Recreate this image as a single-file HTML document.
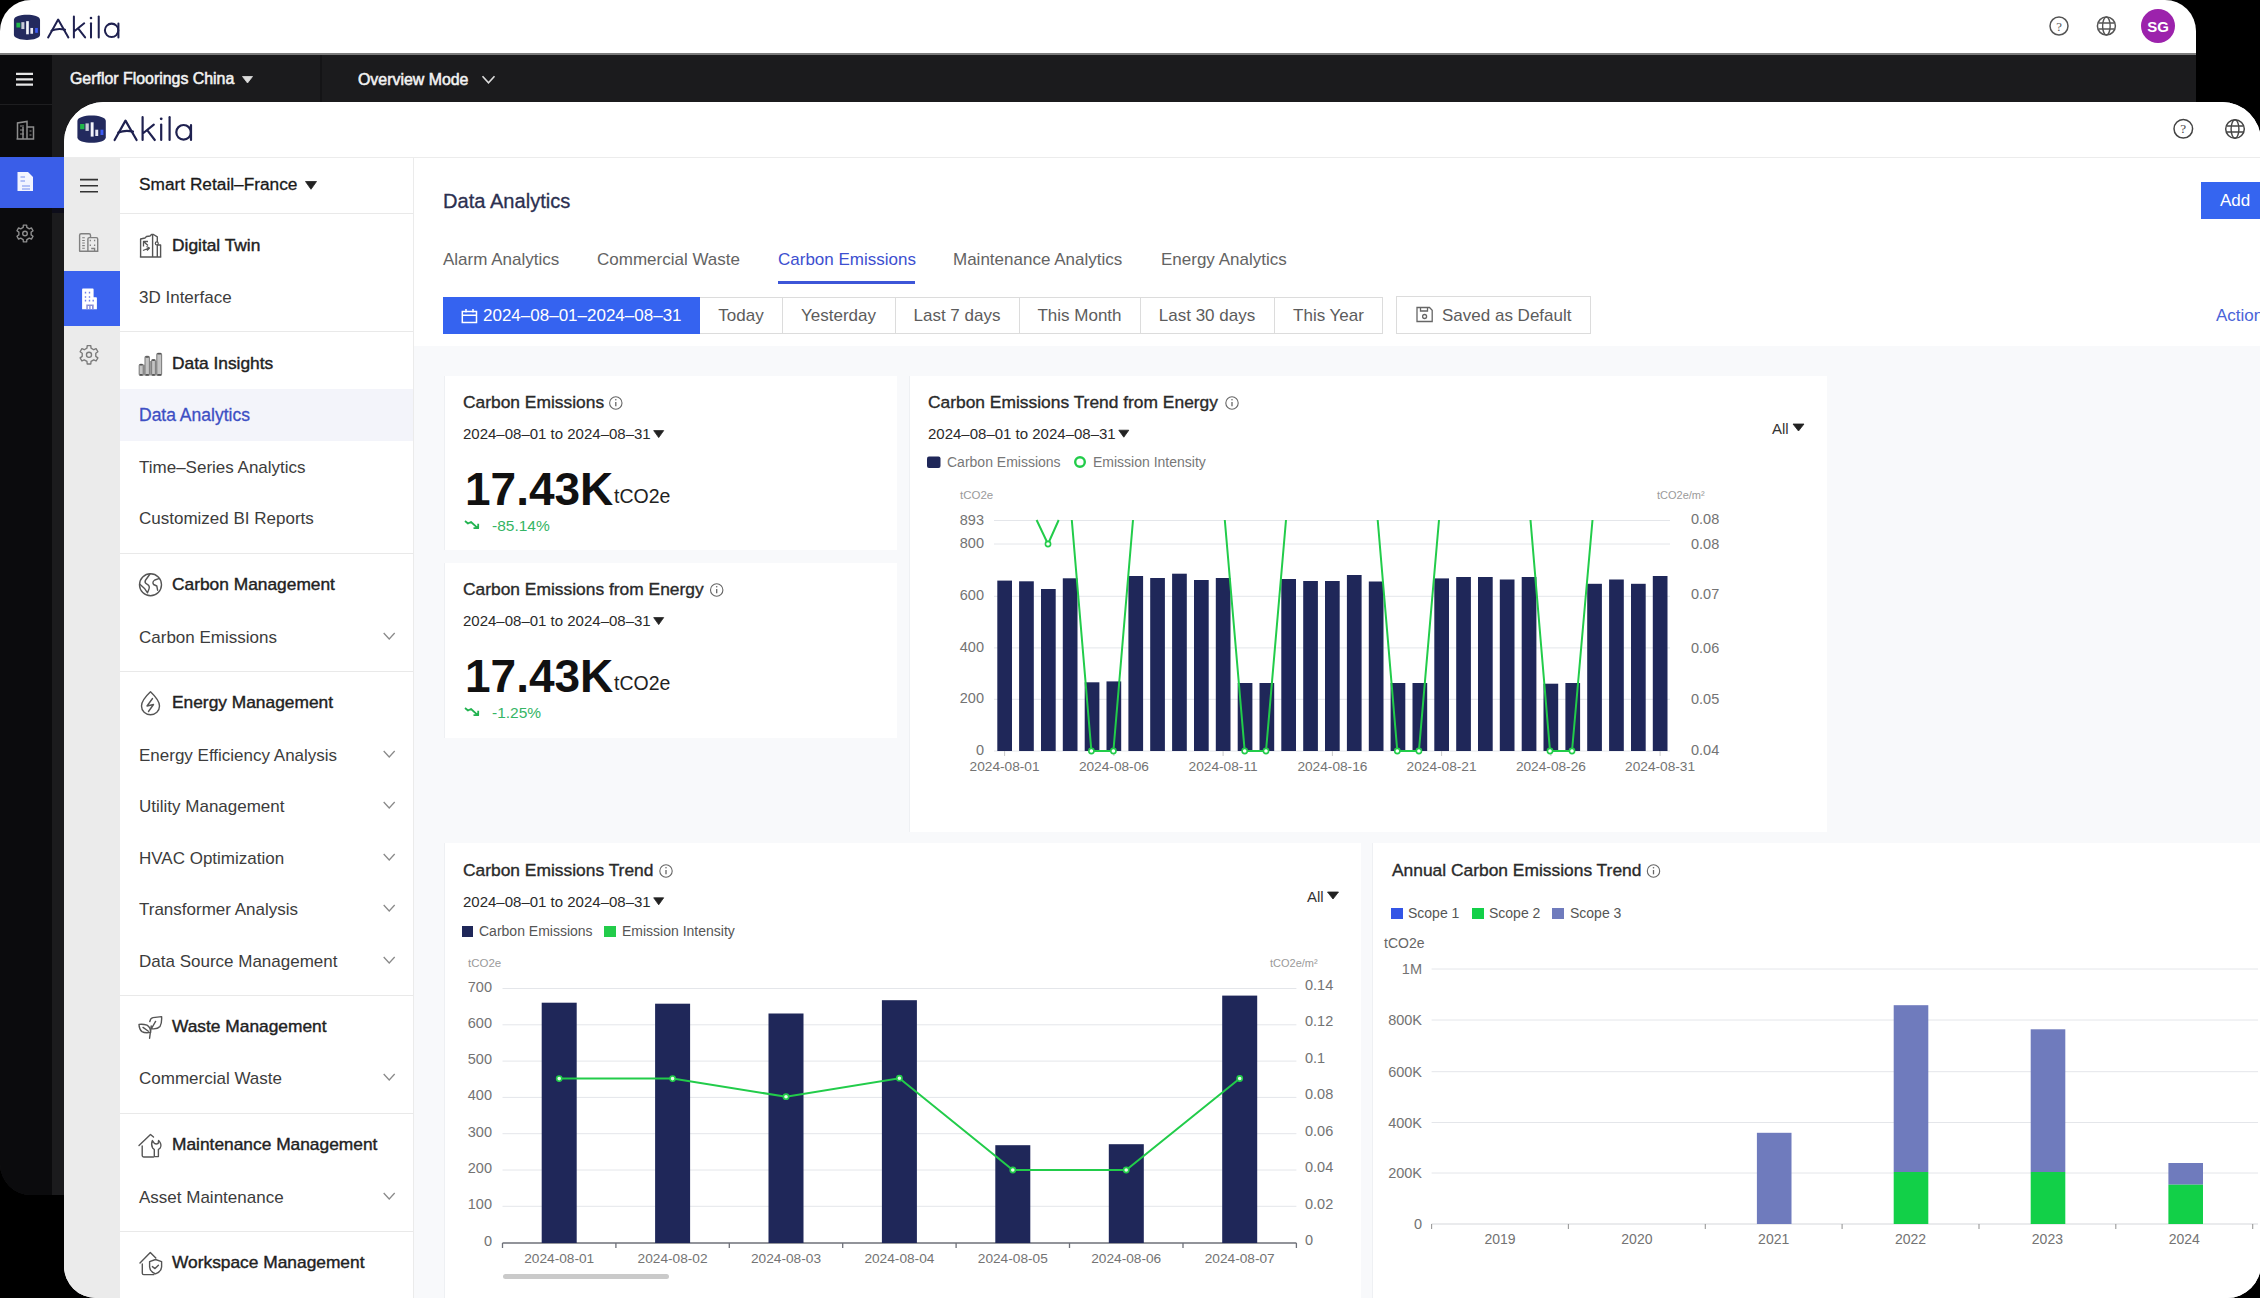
<!DOCTYPE html>
<html><head><meta charset="utf-8">
<style>
*{margin:0;padding:0;box-sizing:border-box}
html,body{width:2260px;height:1298px;overflow:hidden;background:#000;font-family:"Liberation Sans",sans-serif}
.a{position:absolute}
.t{position:absolute;white-space:nowrap;line-height:1}
.layer{position:absolute;left:0;top:0;width:2260px;height:1298px}
#back{clip-path:inset(0 64px 103px 0 round 31px);background:#1b1b1d}
#front{clip-path:inset(102px -1px 0 64px round 40px 39px 34px 32px);background:#f8f9fb}
svg{position:absolute;left:0;top:0}
</style></head>
<body>

<div id="back" class="layer">
<div class="a" style="left:0px;top:0px;width:2196px;height:53px;background:#fff;"></div>
<div class="a" style="left:0px;top:53px;width:2196px;height:2px;background:#7d7d7d;"></div>
<div class="a" style="left:0px;top:55px;width:52px;height:1140px;background:#0b0b0d;"></div>
<div class="a" style="left:0px;top:104px;width:52px;height:1px;background:#1e1e20;"></div>
<div class="a" style="left:0px;top:157px;width:64px;height:51px;background:#3a5ee8;"></div>
<div class="a" style="left:52px;top:208px;width:12px;height:5px;background:#0d0d1a;"></div>
<div class="t" style="left:70px;top:70.7px;font-size:15.9px;color:#f2f2f2;font-weight:normal;-webkit-text-stroke:0.55px #f2f2f2;">Gerflor Floorings China</div>
<div class="t" style="left:358px;top:71.7px;font-size:15.9px;color:#f2f2f2;font-weight:normal;-webkit-text-stroke:0.55px #f2f2f2;">Overview Mode</div>
<div class="a" style="left:320px;top:55px;width:2px;height:47px;background:#141416;"></div>
<svg width="2260" height="1298" style="position:absolute;left:0;top:0">
<g transform="translate(14,14.8) scale(0.92) translate(-77.5,-115.4)"><path d="M77.4,121 C77.4,113.6 105.8,113.6 105.8,121 L105.8,137.2 C105.8,144.6 77.4,144.6 77.4,137.2 Z" fill="#232a5e"/>
<rect x="80.1" y="124" width="4.3" height="5.2" fill="#20b64a"/>
<rect x="85.5" y="123.4" width="3.3" height="7.5" fill="#c9ccd8"/>
<rect x="90.7" y="122.3" width="2.9" height="14.3" fill="#f4f5fa"/>
<rect x="95.3" y="129.7" width="2.9" height="6.3" fill="#e8e9f2"/>
<rect x="100.5" y="129.7" width="2.9" height="5.3" fill="#3d5cf5"/>
<path d="M114.6,140 L125.5,120.6 L136.6,140" fill="none" stroke="#1f2150" stroke-width="2.2" stroke-linecap="round" stroke-linejoin="round"/>
<path d="M118.3,132.6 C123,130.6 128,130.4 133,131.6" fill="none" stroke="#1f2150" stroke-width="2.2" stroke-linecap="round" stroke-linejoin="round"/>
<path d="M142.6,117.2 L142.6,140 M153.8,124.6 L143.4,133 M147.2,130.2 L154.8,140" fill="none" stroke="#1f2150" stroke-width="2.2" stroke-linecap="round" stroke-linejoin="round"/>
<path d="M161.2,124.6 L161.2,140" fill="none" stroke="#1f2150" stroke-width="2.2" stroke-linecap="round" stroke-linejoin="round"/>
<circle cx="161.2" cy="118.8" r="1.4" fill="#1f2150"/>
<path d="M169.6,117.2 L169.6,140" fill="none" stroke="#1f2150" stroke-width="2.2" stroke-linecap="round" stroke-linejoin="round"/>
<circle cx="183.6" cy="132.3" r="7.3" fill="none" stroke="#1f2150" stroke-width="2.2" stroke-linecap="round" stroke-linejoin="round"/>
<path d="M191,125 L191,140" fill="none" stroke="#1f2150" stroke-width="2.2" stroke-linecap="round" stroke-linejoin="round"/></g>
<circle cx="2059" cy="26" r="9" fill="none" stroke="#555" stroke-width="1.5"/><text x="2059" y="30.6" text-anchor="middle" font-size="12.8" fill="#555" font-family="Liberation Serif, serif">?</text>
<circle cx="2106.4" cy="26" r="9" fill="none" stroke="#555" stroke-width="1.5"/><ellipse cx="2106.4" cy="26" rx="3.78" ry="9" fill="none" stroke="#555" stroke-width="1.4"/><path d="M2098.4,23 L2114.4,23 M2098.4,29 L2114.4,29" stroke="#555" stroke-width="1.4"/>
<circle cx="2158" cy="26" r="17" fill="#9c22ac"/>
<text x="2158" y="31.5" text-anchor="middle" font-size="15" font-weight="bold" fill="#fff" font-family="Liberation Sans, sans-serif">SG</text>
<path d="M16,73.8 L33,73.8 M16,79.3 L33,79.3 M16,84.7 L33,84.7" stroke="#e6e6e6" stroke-width="2.2"/>
<path d="M242.5,76.5 L252.5,76.5 L247.5,83 Z" fill="#dcdcdc" stroke="#dcdcdc" stroke-width="0.8" stroke-linejoin="round"/>
<path d="M482.5,76.25 L488.5,82.75 L494.5,76.25" fill="none" stroke="#dcdcdc" stroke-width="1.6"/>
<path d="M17.5,139 L17.5,123 L27,121.5 L27,139 M23,127 L23,139 M27,127 L33.5,127 L33.5,139 L16.5,139" fill="none" stroke="#8d8d8d" stroke-width="1.5"/>
<path d="M20,126 L24,126 M20,130 L24,130 M20,134 L24,134 M29.5,131 L31.5,131 M29.5,135 L31.5,135" stroke="#8d8d8d" stroke-width="1.2"/>
<path d="M17.5,172 L28,172 L33,177 L33,191 L17.5,191 Z" fill="#f2f4ff"/>
<path d="M20.5,177 L25,177 M20.5,181 L25,181 M22,186 L30,186 M22,189 L30,189" stroke="#9fb0f5" stroke-width="1.3"/>
<path d="M23.16,227.48 L23.38,225.16 L26.62,225.16 L26.84,227.48 L29.29,228.90 L31.42,227.92 L33.04,230.73 L31.13,232.09 L31.13,234.91 L33.04,236.27 L31.42,239.08 L29.29,238.10 L26.84,239.52 L26.62,241.84 L23.38,241.84 L23.16,239.52 L20.71,238.10 L18.58,239.08 L16.96,236.27 L18.87,234.91 L18.87,232.09 L16.96,230.73 L18.58,227.92 L20.71,228.90 Z" fill="none" stroke="#8d8d8d" stroke-width="1.4" stroke-linejoin="round"/><circle cx="25" cy="233.5" r="2.29" fill="none" stroke="#8d8d8d" stroke-width="1.4"/>
</svg>
</div>
<div id="front" class="layer">
<div class="a" style="left:64px;top:102px;width:2196px;height:56px;background:#fff;"></div>
<div class="a" style="left:64px;top:157px;width:2196px;height:1px;background:#ececec;"></div>
<div class="a" style="left:64px;top:158px;width:56px;height:1140px;background:#ebebeb;"></div>
<div class="a" style="left:64px;top:271px;width:56px;height:55px;background:#3a62ee;"></div>
<div class="a" style="left:120px;top:158px;width:293px;height:1140px;background:#fff;"></div>
<div class="a" style="left:413px;top:158px;width:1px;height:1140px;background:#ebebeb;"></div>
<div class="a" style="left:120px;top:389px;width:293px;height:52px;background:#f3f4fa;"></div>
<div class="t" style="left:139px;top:176.3px;font-size:17.3px;color:#1a1a1a;font-weight:normal;-webkit-text-stroke:0.3px #1a1a1a;">Smart Retail–France</div>
<div class="a" style="left:120px;top:213px;width:293px;height:1px;background:#e9e9e9;"></div>
<div class="a" style="left:120px;top:331px;width:293px;height:1px;background:#e9e9e9;"></div>
<div class="a" style="left:120px;top:553px;width:293px;height:1px;background:#e9e9e9;"></div>
<div class="a" style="left:120px;top:671px;width:293px;height:1px;background:#e9e9e9;"></div>
<div class="a" style="left:120px;top:995px;width:293px;height:1px;background:#e9e9e9;"></div>
<div class="a" style="left:120px;top:1113px;width:293px;height:1px;background:#e9e9e9;"></div>
<div class="a" style="left:120px;top:1231px;width:293px;height:1px;background:#e9e9e9;"></div>
<div class="t" style="left:172px;top:237.3px;font-size:17.35px;color:#222;font-weight:normal;-webkit-text-stroke:0.4px #222;">Digital Twin</div>
<div class="t" style="left:139px;top:288.5px;font-size:17px;color:#3c3c3c;font-weight:normal;">3D Interface</div>
<div class="t" style="left:172px;top:355.3px;font-size:17.35px;color:#222;font-weight:normal;-webkit-text-stroke:0.4px #222;">Data Insights</div>
<div class="t" style="left:139px;top:406.7px;font-size:17.5px;color:#3d4fc4;font-weight:normal;-webkit-text-stroke:0.3px #3d4fc4;">Data Analytics</div>
<div class="t" style="left:139px;top:458.5px;font-size:17px;color:#3c3c3c;font-weight:normal;">Time–Series Analytics</div>
<div class="t" style="left:139px;top:509.5px;font-size:17px;color:#3c3c3c;font-weight:normal;">Customized BI Reports</div>
<div class="t" style="left:172px;top:576.3px;font-size:17.35px;color:#222;font-weight:normal;-webkit-text-stroke:0.4px #222;">Carbon Management</div>
<div class="t" style="left:139px;top:628.5px;font-size:17px;color:#3c3c3c;font-weight:normal;">Carbon Emissions</div>
<div class="t" style="left:172px;top:694.3px;font-size:17.35px;color:#222;font-weight:normal;-webkit-text-stroke:0.4px #222;">Energy Management</div>
<div class="t" style="left:139px;top:746.5px;font-size:17px;color:#3c3c3c;font-weight:normal;">Energy Efficiency Analysis</div>
<div class="t" style="left:139px;top:797.5px;font-size:17px;color:#3c3c3c;font-weight:normal;">Utility Management</div>
<div class="t" style="left:139px;top:849.5px;font-size:17px;color:#3c3c3c;font-weight:normal;">HVAC Optimization</div>
<div class="t" style="left:139px;top:900.5px;font-size:17px;color:#3c3c3c;font-weight:normal;">Transformer Analysis</div>
<div class="t" style="left:139px;top:952.5px;font-size:17px;color:#3c3c3c;font-weight:normal;">Data Source Management</div>
<div class="t" style="left:172px;top:1018.3px;font-size:17.35px;color:#222;font-weight:normal;-webkit-text-stroke:0.4px #222;">Waste Management</div>
<div class="t" style="left:139px;top:1069.5px;font-size:17px;color:#3c3c3c;font-weight:normal;">Commercial Waste</div>
<div class="t" style="left:172px;top:1136.3px;font-size:17.35px;color:#222;font-weight:normal;-webkit-text-stroke:0.4px #222;">Maintenance Management</div>
<div class="t" style="left:139px;top:1188.5px;font-size:17px;color:#3c3c3c;font-weight:normal;">Asset Maintenance</div>
<div class="t" style="left:172px;top:1254.3px;font-size:17.35px;color:#222;font-weight:normal;-webkit-text-stroke:0.4px #222;">Workspace Management</div>
<!--MENUICONS-->
<div class="a" style="left:414px;top:158px;width:1846px;height:188px;background:#fff;"></div>
<div class="t" style="left:443px;top:190.5px;font-size:20.1px;color:#2c3050;font-weight:normal;-webkit-text-stroke:0.3px #2c3050;">Data Analytics</div>
<div class="a" style="left:2201px;top:182px;width:80px;height:37px;background:#3565f0;"></div>
<div class="t" style="left:2220px;top:192.2px;font-size:17px;color:#fff;font-weight:normal;">Add</div>
<div class="t" style="left:443px;top:250.7px;font-size:17px;color:#636363;font-weight:normal;">Alarm Analytics</div>
<div class="t" style="left:597px;top:250.7px;font-size:17px;color:#636363;font-weight:normal;">Commercial Waste</div>
<div class="t" style="left:778px;top:250.7px;font-size:17px;color:#3d4fd0;font-weight:normal;">Carbon Emissions</div>
<div class="t" style="left:953px;top:250.7px;font-size:17px;color:#636363;font-weight:normal;">Maintenance Analytics</div>
<div class="t" style="left:1161px;top:250.7px;font-size:17px;color:#636363;font-weight:normal;">Energy Analytics</div>
<div class="a" style="left:778px;top:281px;width:137px;height:3px;background:#3d56d8;"></div>
<div class="a" style="left:443px;top:297px;width:257px;height:37px;background:#3563f0;"></div>
<div class="a" style="left:700px;top:297px;width:683px;height:37px;border:1px solid #dcdcdc;border-left:none;background:#fff"></div>
<div class="t" style="left:441.0px;width:600px;text-align:center;top:307.4px;font-size:17px;color:#5c5c5c;font-weight:normal;">Today</div>
<div class="a" style="left:782px;top:297px;width:1px;height:37px;background:#dcdcdc;"></div>
<div class="t" style="left:538.5px;width:600px;text-align:center;top:307.4px;font-size:17px;color:#5c5c5c;font-weight:normal;">Yesterday</div>
<div class="a" style="left:895px;top:297px;width:1px;height:37px;background:#dcdcdc;"></div>
<div class="t" style="left:657.0px;width:600px;text-align:center;top:307.4px;font-size:17px;color:#5c5c5c;font-weight:normal;">Last 7 days</div>
<div class="a" style="left:1019px;top:297px;width:1px;height:37px;background:#dcdcdc;"></div>
<div class="t" style="left:779.5px;width:600px;text-align:center;top:307.4px;font-size:17px;color:#5c5c5c;font-weight:normal;">This Month</div>
<div class="a" style="left:1140px;top:297px;width:1px;height:37px;background:#dcdcdc;"></div>
<div class="t" style="left:907.0px;width:600px;text-align:center;top:307.4px;font-size:17px;color:#5c5c5c;font-weight:normal;">Last 30 days</div>
<div class="a" style="left:1274px;top:297px;width:1px;height:37px;background:#dcdcdc;"></div>
<div class="t" style="left:1028.5px;width:600px;text-align:center;top:307.4px;font-size:17px;color:#5c5c5c;font-weight:normal;">This Year</div>
<div class="t" style="left:483px;top:307.2px;font-size:17px;color:#fff;font-weight:normal;">2024–08–01–2024–08–31</div>
<div class="a" style="left:1396px;top:296px;width:195px;height:38px;border:1px solid #dcdcdc;background:#fff"></div>
<div class="t" style="left:1442px;top:307.4px;font-size:17px;color:#5c5c5c;font-weight:normal;">Saved as Default</div>
<div class="t" style="left:2216px;top:307.2px;font-size:17px;color:#4a64d8;font-weight:normal;">Action</div>
<div class="a" style="left:444px;top:376px;width:453px;height:174px;background:#fff;border-left:1px solid #eef0f3"></div>
<div class="a" style="left:444px;top:563px;width:453px;height:175px;background:#fff;border-left:1px solid #eef0f3"></div>
<div class="a" style="left:909px;top:376px;width:918px;height:456px;background:#fff;border-left:1px solid #eef0f3"></div>
<div class="a" style="left:444px;top:843px;width:917px;height:500px;background:#fff;border-left:1px solid #eef0f3"></div>
<div class="a" style="left:1372px;top:843px;width:900px;height:500px;background:#fff;border-left:1px solid #eef0f3"></div>
<div class="t" style="left:463px;top:394.0px;font-size:17.4px;color:#2a2a2a;font-weight:normal;-webkit-text-stroke:0.35px #2a2a2a;">Carbon Emissions</div>
<div class="t" style="left:463px;top:426.2px;font-size:15px;color:#2a2a2a;font-weight:normal;">2024–08–01 to 2024–08–31</div>
<div class="t" style="left:465px;top:466px;font-size:46px;font-weight:bold;color:#111">17.43K</div>
<div class="t" style="left:614px;top:487px;font-size:19.5px;color:#222">tCO2e</div>
<div class="t" style="left:492px;top:518.4px;font-size:15.5px;color:#35b565;font-weight:normal;">-85.14%</div>
<div class="t" style="left:463px;top:581.0px;font-size:17.4px;color:#2a2a2a;font-weight:normal;-webkit-text-stroke:0.35px #2a2a2a;">Carbon Emissions from Energy</div>
<div class="t" style="left:463px;top:613.2px;font-size:15px;color:#2a2a2a;font-weight:normal;">2024–08–01 to 2024–08–31</div>
<div class="t" style="left:465px;top:653px;font-size:46px;font-weight:bold;color:#111">17.43K</div>
<div class="t" style="left:614px;top:674px;font-size:19.5px;color:#222">tCO2e</div>
<div class="t" style="left:492px;top:705.4px;font-size:15.5px;color:#35b565;font-weight:normal;">-1.25%</div>
<div class="t" style="left:928px;top:394.0px;font-size:17.4px;color:#2a2a2a;font-weight:normal;-webkit-text-stroke:0.35px #2a2a2a;">Carbon Emissions Trend from Energy</div>
<div class="t" style="left:928px;top:426.2px;font-size:15px;color:#2a2a2a;font-weight:normal;">2024–08–01 to 2024–08–31</div>
<div class="t" style="left:463px;top:862.0px;font-size:17.4px;color:#2a2a2a;font-weight:normal;-webkit-text-stroke:0.35px #2a2a2a;">Carbon Emissions Trend</div>
<div class="t" style="left:463px;top:894.2px;font-size:15px;color:#2a2a2a;font-weight:normal;">2024–08–01 to 2024–08–31</div>
<div class="t" style="left:1392px;top:862.0px;font-size:17.4px;color:#2a2a2a;font-weight:normal;-webkit-text-stroke:0.35px #2a2a2a;">Annual Carbon Emissions Trend</div>
<svg width="2260" height="1298" viewBox="0 0 2260 1298" style="position:absolute;left:0;top:0">
<line x1="994" y1="520.5" x2="1670" y2="520.5" stroke="#e4e6ea" stroke-width="1"/>
<text x="984" y="524.5" text-anchor="end" font-size="14.5" fill="#737373" font-family="Liberation Sans, sans-serif">893</text>
<line x1="994" y1="544" x2="1670" y2="544" stroke="#e4e6ea" stroke-width="1"/>
<text x="984" y="548" text-anchor="end" font-size="14.5" fill="#737373" font-family="Liberation Sans, sans-serif">800</text>
<line x1="994" y1="596.3" x2="1670" y2="596.3" stroke="#e4e6ea" stroke-width="1"/>
<text x="984" y="600.3" text-anchor="end" font-size="14.5" fill="#737373" font-family="Liberation Sans, sans-serif">600</text>
<line x1="994" y1="647.9" x2="1670" y2="647.9" stroke="#e4e6ea" stroke-width="1"/>
<text x="984" y="651.9" text-anchor="end" font-size="14.5" fill="#737373" font-family="Liberation Sans, sans-serif">400</text>
<line x1="994" y1="699.3" x2="1670" y2="699.3" stroke="#e4e6ea" stroke-width="1"/>
<text x="984" y="703.3" text-anchor="end" font-size="14.5" fill="#737373" font-family="Liberation Sans, sans-serif">200</text>
<line x1="994" y1="751" x2="1670" y2="751" stroke="#e4e6ea" stroke-width="1"/>
<text x="984" y="755" text-anchor="end" font-size="14.5" fill="#737373" font-family="Liberation Sans, sans-serif">0</text>
<text x="1691" y="524" font-size="14.5" fill="#737373" font-family="Liberation Sans, sans-serif">0.08</text>
<text x="1691" y="549" font-size="14.5" fill="#737373" font-family="Liberation Sans, sans-serif">0.08</text>
<text x="1691" y="599.4" font-size="14.5" fill="#737373" font-family="Liberation Sans, sans-serif">0.07</text>
<text x="1691" y="652.5" font-size="14.5" fill="#737373" font-family="Liberation Sans, sans-serif">0.06</text>
<text x="1691" y="704" font-size="14.5" fill="#737373" font-family="Liberation Sans, sans-serif">0.05</text>
<text x="1691" y="755.3" font-size="14.5" fill="#737373" font-family="Liberation Sans, sans-serif">0.04</text>
<text x="960" y="499" font-size="11.5" fill="#9a9a9a" font-family="Liberation Sans, sans-serif">tCO2e</text>
<text x="1657" y="499" font-size="11" fill="#9a9a9a" font-family="Liberation Sans, sans-serif">tCO2e/m²</text>
<rect x="997.3" y="580.6" width="14.7" height="170.4" fill="#1f2759"/>
<rect x="1019.1" y="581.3" width="14.7" height="169.7" fill="#1f2759"/>
<rect x="1041.0" y="589" width="14.7" height="162.0" fill="#1f2759"/>
<rect x="1062.8" y="578.3" width="14.7" height="172.7" fill="#1f2759"/>
<rect x="1084.7" y="682.3" width="14.7" height="68.7" fill="#1f2759"/>
<rect x="1106.5" y="681.4" width="14.7" height="69.6" fill="#1f2759"/>
<rect x="1128.4" y="576" width="14.7" height="175.0" fill="#1f2759"/>
<rect x="1150.2" y="578" width="14.7" height="173.0" fill="#1f2759"/>
<rect x="1172.1" y="573.7" width="14.7" height="177.3" fill="#1f2759"/>
<rect x="1194.0" y="580" width="14.7" height="171.0" fill="#1f2759"/>
<rect x="1215.8" y="578" width="14.7" height="173.0" fill="#1f2759"/>
<rect x="1237.7" y="683" width="14.7" height="68.0" fill="#1f2759"/>
<rect x="1259.5" y="683" width="14.7" height="68.0" fill="#1f2759"/>
<rect x="1281.3" y="579" width="14.7" height="172.0" fill="#1f2759"/>
<rect x="1303.2" y="581" width="14.7" height="170.0" fill="#1f2759"/>
<rect x="1325.0" y="581" width="14.7" height="170.0" fill="#1f2759"/>
<rect x="1346.9" y="575" width="14.7" height="176.0" fill="#1f2759"/>
<rect x="1368.8" y="581.5" width="14.7" height="169.5" fill="#1f2759"/>
<rect x="1390.6" y="683" width="14.7" height="68.0" fill="#1f2759"/>
<rect x="1412.5" y="683" width="14.7" height="68.0" fill="#1f2759"/>
<rect x="1434.3" y="578.4" width="14.7" height="172.6" fill="#1f2759"/>
<rect x="1456.2" y="577" width="14.7" height="174.0" fill="#1f2759"/>
<rect x="1478.0" y="577" width="14.7" height="174.0" fill="#1f2759"/>
<rect x="1499.8" y="579.5" width="14.7" height="171.5" fill="#1f2759"/>
<rect x="1521.7" y="577" width="14.7" height="174.0" fill="#1f2759"/>
<rect x="1543.5" y="683.7" width="14.7" height="67.3" fill="#1f2759"/>
<rect x="1565.4" y="683" width="14.7" height="68.0" fill="#1f2759"/>
<rect x="1587.2" y="583.8" width="14.7" height="167.2" fill="#1f2759"/>
<rect x="1609.1" y="579.5" width="14.7" height="171.5" fill="#1f2759"/>
<rect x="1631.0" y="583.8" width="14.7" height="167.2" fill="#1f2759"/>
<rect x="1652.8" y="576" width="14.7" height="175.0" fill="#1f2759"/>
<line x1="1004.6" y1="751" x2="1004.6" y2="756" stroke="#c9c9c9" stroke-width="1"/>
<text x="1004.6" y="771" text-anchor="middle" font-size="13.7" fill="#737373" font-family="Liberation Sans, sans-serif">2024-08-01</text>
<line x1="1113.9" y1="751" x2="1113.9" y2="756" stroke="#c9c9c9" stroke-width="1"/>
<text x="1113.9" y="771" text-anchor="middle" font-size="13.7" fill="#737373" font-family="Liberation Sans, sans-serif">2024-08-06</text>
<line x1="1223.1" y1="751" x2="1223.1" y2="756" stroke="#c9c9c9" stroke-width="1"/>
<text x="1223.1" y="771" text-anchor="middle" font-size="13.7" fill="#737373" font-family="Liberation Sans, sans-serif">2024-08-11</text>
<line x1="1332.4" y1="751" x2="1332.4" y2="756" stroke="#c9c9c9" stroke-width="1"/>
<text x="1332.4" y="771" text-anchor="middle" font-size="13.7" fill="#737373" font-family="Liberation Sans, sans-serif">2024-08-16</text>
<line x1="1441.6" y1="751" x2="1441.6" y2="756" stroke="#c9c9c9" stroke-width="1"/>
<text x="1441.6" y="771" text-anchor="middle" font-size="13.7" fill="#737373" font-family="Liberation Sans, sans-serif">2024-08-21</text>
<line x1="1550.9" y1="751" x2="1550.9" y2="756" stroke="#c9c9c9" stroke-width="1"/>
<text x="1550.9" y="771" text-anchor="middle" font-size="13.7" fill="#737373" font-family="Liberation Sans, sans-serif">2024-08-26</text>
<line x1="1660.1" y1="751" x2="1660.1" y2="756" stroke="#c9c9c9" stroke-width="1"/>
<text x="1660.1" y="771" text-anchor="middle" font-size="13.7" fill="#737373" font-family="Liberation Sans, sans-serif">2024-08-31</text>
<polyline points="1036.6,520 1048,544 1058.7,520" fill="none" stroke="#22cc4a" stroke-width="2"/>
<circle cx="1048" cy="544" r="2.6" fill="#fff" stroke="#22cc4a" stroke-width="1.6"/>
<polyline points="1071.8,520 1091.4,751 1113.4,751 1133,520" fill="none" stroke="#22cc4a" stroke-width="2"/>
<circle cx="1091.4" cy="751" r="2.6" fill="#fff" stroke="#22cc4a" stroke-width="1.6"/>
<circle cx="1113.4" cy="751" r="2.6" fill="#fff" stroke="#22cc4a" stroke-width="1.6"/>
<polyline points="1224.8,520 1244.7,751 1266,751 1286,520" fill="none" stroke="#22cc4a" stroke-width="2"/>
<circle cx="1244.7" cy="751" r="2.6" fill="#fff" stroke="#22cc4a" stroke-width="1.6"/>
<circle cx="1266" cy="751" r="2.6" fill="#fff" stroke="#22cc4a" stroke-width="1.6"/>
<polyline points="1377.7,520 1397.3,751 1418.9,751 1439,520" fill="none" stroke="#22cc4a" stroke-width="2"/>
<circle cx="1397.3" cy="751" r="2.6" fill="#fff" stroke="#22cc4a" stroke-width="1.6"/>
<circle cx="1418.9" cy="751" r="2.6" fill="#fff" stroke="#22cc4a" stroke-width="1.6"/>
<polyline points="1530.5,520 1550,751 1572,751 1592.5,520" fill="none" stroke="#22cc4a" stroke-width="2"/>
<circle cx="1550" cy="751" r="2.6" fill="#fff" stroke="#22cc4a" stroke-width="1.6"/>
<circle cx="1572" cy="751" r="2.6" fill="#fff" stroke="#22cc4a" stroke-width="1.6"/>
<rect x="927" y="456.5" width="13.5" height="11.5" rx="2" fill="#1f2759"/>
<text x="947" y="467" font-size="14" fill="#777" font-family="Liberation Sans, sans-serif">Carbon Emissions</text>
<circle cx="1080" cy="462" r="4.8" fill="none" stroke="#22cc4a" stroke-width="2.4"/>
<text x="1093" y="467" font-size="14" fill="#777" font-family="Liberation Sans, sans-serif">Emission Intensity</text>
<line x1="502.5" y1="988.5" x2="1296.4" y2="988.5" stroke="#e4e6ea" stroke-width="1"/>
<text x="492" y="991.5" text-anchor="end" font-size="14.5" fill="#737373" font-family="Liberation Sans, sans-serif">700</text>
<line x1="502.5" y1="1024.8" x2="1296.4" y2="1024.8" stroke="#e4e6ea" stroke-width="1"/>
<text x="492" y="1027.8" text-anchor="end" font-size="14.5" fill="#737373" font-family="Liberation Sans, sans-serif">600</text>
<line x1="502.5" y1="1061.1" x2="1296.4" y2="1061.1" stroke="#e4e6ea" stroke-width="1"/>
<text x="492" y="1064.1" text-anchor="end" font-size="14.5" fill="#737373" font-family="Liberation Sans, sans-serif">500</text>
<line x1="502.5" y1="1097.4" x2="1296.4" y2="1097.4" stroke="#e4e6ea" stroke-width="1"/>
<text x="492" y="1100.4" text-anchor="end" font-size="14.5" fill="#737373" font-family="Liberation Sans, sans-serif">400</text>
<line x1="502.5" y1="1133.7" x2="1296.4" y2="1133.7" stroke="#e4e6ea" stroke-width="1"/>
<text x="492" y="1136.7" text-anchor="end" font-size="14.5" fill="#737373" font-family="Liberation Sans, sans-serif">300</text>
<line x1="502.5" y1="1170" x2="1296.4" y2="1170" stroke="#e4e6ea" stroke-width="1"/>
<text x="492" y="1173" text-anchor="end" font-size="14.5" fill="#737373" font-family="Liberation Sans, sans-serif">200</text>
<line x1="502.5" y1="1206.3" x2="1296.4" y2="1206.3" stroke="#e4e6ea" stroke-width="1"/>
<text x="492" y="1209.3" text-anchor="end" font-size="14.5" fill="#737373" font-family="Liberation Sans, sans-serif">100</text>
<text x="492" y="1245.6" text-anchor="end" font-size="14.5" fill="#737373" font-family="Liberation Sans, sans-serif">0</text>
<text x="1305" y="989.9" font-size="14.5" fill="#737373" font-family="Liberation Sans, sans-serif">0.14</text>
<text x="1305" y="1026.34" font-size="14.5" fill="#737373" font-family="Liberation Sans, sans-serif">0.12</text>
<text x="1305" y="1062.78" font-size="14.5" fill="#737373" font-family="Liberation Sans, sans-serif">0.1</text>
<text x="1305" y="1099.22" font-size="14.5" fill="#737373" font-family="Liberation Sans, sans-serif">0.08</text>
<text x="1305" y="1135.6599999999999" font-size="14.5" fill="#737373" font-family="Liberation Sans, sans-serif">0.06</text>
<text x="1305" y="1172.1" font-size="14.5" fill="#737373" font-family="Liberation Sans, sans-serif">0.04</text>
<text x="1305" y="1208.54" font-size="14.5" fill="#737373" font-family="Liberation Sans, sans-serif">0.02</text>
<text x="1305" y="1244.98" font-size="14.5" fill="#737373" font-family="Liberation Sans, sans-serif">0</text>
<line x1="502.5" y1="1243" x2="1296.4" y2="1243" stroke="#6e7079" stroke-width="1.3"/>
<line x1="502.5" y1="1243" x2="502.5" y2="1248" stroke="#6e7079" stroke-width="1.3"/>
<line x1="615.9" y1="1243" x2="615.9" y2="1248" stroke="#6e7079" stroke-width="1.3"/>
<line x1="729.3" y1="1243" x2="729.3" y2="1248" stroke="#6e7079" stroke-width="1.3"/>
<line x1="842.7" y1="1243" x2="842.7" y2="1248" stroke="#6e7079" stroke-width="1.3"/>
<line x1="956.1" y1="1243" x2="956.1" y2="1248" stroke="#6e7079" stroke-width="1.3"/>
<line x1="1069.5" y1="1243" x2="1069.5" y2="1248" stroke="#6e7079" stroke-width="1.3"/>
<line x1="1183.0" y1="1243" x2="1183.0" y2="1248" stroke="#6e7079" stroke-width="1.3"/>
<line x1="1296.4" y1="1243" x2="1296.4" y2="1248" stroke="#6e7079" stroke-width="1.3"/>
<text x="468" y="967" font-size="11.5" fill="#9a9a9a" font-family="Liberation Sans, sans-serif">tCO2e</text>
<text x="1270" y="967" font-size="11" fill="#9a9a9a" font-family="Liberation Sans, sans-serif">tCO2e/m²</text>
<rect x="541.7" y="1002.7" width="35" height="240.3" fill="#1f2759"/>
<text x="559.2" y="1263" text-anchor="middle" font-size="13.7" fill="#737373" font-family="Liberation Sans, sans-serif">2024-08-01</text>
<rect x="655.1" y="1003.7" width="35" height="239.3" fill="#1f2759"/>
<text x="672.6" y="1263" text-anchor="middle" font-size="13.7" fill="#737373" font-family="Liberation Sans, sans-serif">2024-08-02</text>
<rect x="768.5" y="1013.5" width="35" height="229.5" fill="#1f2759"/>
<text x="786.0" y="1263" text-anchor="middle" font-size="13.7" fill="#737373" font-family="Liberation Sans, sans-serif">2024-08-03</text>
<rect x="881.9" y="1000.2" width="35" height="242.8" fill="#1f2759"/>
<text x="899.4" y="1263" text-anchor="middle" font-size="13.7" fill="#737373" font-family="Liberation Sans, sans-serif">2024-08-04</text>
<rect x="995.3" y="1145.2" width="35" height="97.8" fill="#1f2759"/>
<text x="1012.8" y="1263" text-anchor="middle" font-size="13.7" fill="#737373" font-family="Liberation Sans, sans-serif">2024-08-05</text>
<rect x="1108.8" y="1144.2" width="35" height="98.8" fill="#1f2759"/>
<text x="1126.2" y="1263" text-anchor="middle" font-size="13.7" fill="#737373" font-family="Liberation Sans, sans-serif">2024-08-06</text>
<rect x="1222.2" y="995.6" width="35" height="247.4" fill="#1f2759"/>
<text x="1239.7" y="1263" text-anchor="middle" font-size="13.7" fill="#737373" font-family="Liberation Sans, sans-serif">2024-08-07</text>
<polyline points="559.2,1078.6 672.6,1078.6 786.0,1096.7 899.4,1078.2 1012.8,1170 1126.2,1170 1239.7,1078.5" fill="none" stroke="#22cc4a" stroke-width="2"/>
<circle cx="559.2" cy="1078.6" r="2.6" fill="#e8fbe9" stroke="#22cc4a" stroke-width="1.6"/>
<circle cx="672.6" cy="1078.6" r="2.6" fill="#e8fbe9" stroke="#22cc4a" stroke-width="1.6"/>
<circle cx="786.0" cy="1096.7" r="2.6" fill="#e8fbe9" stroke="#22cc4a" stroke-width="1.6"/>
<circle cx="899.4" cy="1078.2" r="2.6" fill="#e8fbe9" stroke="#22cc4a" stroke-width="1.6"/>
<circle cx="1012.8" cy="1170" r="2.6" fill="#e8fbe9" stroke="#22cc4a" stroke-width="1.6"/>
<circle cx="1126.2" cy="1170" r="2.6" fill="#e8fbe9" stroke="#22cc4a" stroke-width="1.6"/>
<circle cx="1239.7" cy="1078.5" r="2.6" fill="#e8fbe9" stroke="#22cc4a" stroke-width="1.6"/>
<rect x="503" y="1274" width="166" height="5" rx="2.5" fill="#cacaca"/>
<rect x="462" y="926" width="11" height="11" fill="#1f2759"/>
<text x="479" y="936" font-size="14" fill="#555" font-family="Liberation Sans, sans-serif">Carbon Emissions</text>
<rect x="604" y="926" width="12" height="11" fill="#22cc4a"/>
<text x="622" y="936" font-size="14" fill="#555" font-family="Liberation Sans, sans-serif">Emission Intensity</text>
<line x1="1431.6" y1="969" x2="2258" y2="969" stroke="#e4e6ea" stroke-width="1"/>
<text x="1422" y="974" text-anchor="end" font-size="14.5" fill="#737373" font-family="Liberation Sans, sans-serif">1M</text>
<line x1="1431.6" y1="1020" x2="2258" y2="1020" stroke="#e4e6ea" stroke-width="1"/>
<text x="1422" y="1025" text-anchor="end" font-size="14.5" fill="#737373" font-family="Liberation Sans, sans-serif">800K</text>
<line x1="1431.6" y1="1071.7" x2="2258" y2="1071.7" stroke="#e4e6ea" stroke-width="1"/>
<text x="1422" y="1076.7" text-anchor="end" font-size="14.5" fill="#737373" font-family="Liberation Sans, sans-serif">600K</text>
<line x1="1431.6" y1="1122.5" x2="2258" y2="1122.5" stroke="#e4e6ea" stroke-width="1"/>
<text x="1422" y="1127.5" text-anchor="end" font-size="14.5" fill="#737373" font-family="Liberation Sans, sans-serif">400K</text>
<line x1="1431.6" y1="1173" x2="2258" y2="1173" stroke="#e4e6ea" stroke-width="1"/>
<text x="1422" y="1178" text-anchor="end" font-size="14.5" fill="#737373" font-family="Liberation Sans, sans-serif">200K</text>
<text x="1422" y="1228.8" text-anchor="end" font-size="14.5" fill="#737373" font-family="Liberation Sans, sans-serif">0</text>
<line x1="1431.6" y1="1224" x2="2258" y2="1224" stroke="#d5d7dc" stroke-width="1.2"/>
<line x1="1431.6" y1="1224" x2="1431.6" y2="1229" stroke="#9a9a9a" stroke-width="1.1"/>
<line x1="1568.4" y1="1224" x2="1568.4" y2="1229" stroke="#9a9a9a" stroke-width="1.1"/>
<line x1="1705.3" y1="1224" x2="1705.3" y2="1229" stroke="#9a9a9a" stroke-width="1.1"/>
<line x1="1842.1" y1="1224" x2="1842.1" y2="1229" stroke="#9a9a9a" stroke-width="1.1"/>
<line x1="1979.0" y1="1224" x2="1979.0" y2="1229" stroke="#9a9a9a" stroke-width="1.1"/>
<line x1="2115.8" y1="1224" x2="2115.8" y2="1229" stroke="#9a9a9a" stroke-width="1.1"/>
<line x1="2252.7" y1="1224" x2="2252.7" y2="1229" stroke="#9a9a9a" stroke-width="1.1"/>
<text x="1500.0" y="1244" text-anchor="middle" font-size="14" fill="#737373" font-family="Liberation Sans, sans-serif">2019</text>
<text x="1636.9" y="1244" text-anchor="middle" font-size="14" fill="#737373" font-family="Liberation Sans, sans-serif">2020</text>
<text x="1773.7" y="1244" text-anchor="middle" font-size="14" fill="#737373" font-family="Liberation Sans, sans-serif">2021</text>
<text x="1910.6" y="1244" text-anchor="middle" font-size="14" fill="#737373" font-family="Liberation Sans, sans-serif">2022</text>
<text x="2047.4" y="1244" text-anchor="middle" font-size="14" fill="#737373" font-family="Liberation Sans, sans-serif">2023</text>
<text x="2184.3" y="1244" text-anchor="middle" font-size="14" fill="#737373" font-family="Liberation Sans, sans-serif">2024</text>
<rect x="1756.9" y="1132.8" width="34.6" height="91.2" fill="#6f7bbd"/>
<rect x="1893.7" y="1005.2" width="34.6" height="166.8" fill="#6f7bbd"/>
<rect x="1893.7" y="1172" width="34.6" height="52.0" fill="#12d048"/>
<rect x="2030.7" y="1029.3" width="34.6" height="142.7" fill="#6f7bbd"/>
<rect x="2030.7" y="1172" width="34.6" height="52.0" fill="#12d048"/>
<rect x="2168.4" y="1163" width="34.6" height="21.7" fill="#6f7bbd"/>
<rect x="2168.4" y="1184.7" width="34.6" height="39.3" fill="#12d048"/>
<text x="1384" y="948" font-size="14" fill="#666" font-family="Liberation Sans, sans-serif">tCO2e</text>
<rect x="1391" y="908" width="12" height="11" fill="#3355e6"/>
<text x="1408" y="918" font-size="14" fill="#555" font-family="Liberation Sans, sans-serif">Scope 1</text>
<rect x="1472" y="908" width="12" height="11" fill="#12d048"/>
<text x="1489" y="918" font-size="14" fill="#555" font-family="Liberation Sans, sans-serif">Scope 2</text>
<rect x="1552" y="908" width="12" height="11" fill="#6f7bbd"/>
<text x="1570" y="918" font-size="14" fill="#555" font-family="Liberation Sans, sans-serif">Scope 3</text>
</svg>
<svg width="2260" height="1298" style="position:absolute;left:0;top:0">
<path d="M77.4,121 C77.4,113.6 105.8,113.6 105.8,121 L105.8,137.2 C105.8,144.6 77.4,144.6 77.4,137.2 Z" fill="#232a5e"/>
<rect x="80.1" y="124" width="4.3" height="5.2" fill="#20b64a"/>
<rect x="85.5" y="123.4" width="3.3" height="7.5" fill="#c9ccd8"/>
<rect x="90.7" y="122.3" width="2.9" height="14.3" fill="#f4f5fa"/>
<rect x="95.3" y="129.7" width="2.9" height="6.3" fill="#e8e9f2"/>
<rect x="100.5" y="129.7" width="2.9" height="5.3" fill="#3d5cf5"/>
<path d="M114.6,140 L125.5,120.6 L136.6,140" fill="none" stroke="#1f2150" stroke-width="2.2" stroke-linecap="round" stroke-linejoin="round"/>
<path d="M118.3,132.6 C123,130.6 128,130.4 133,131.6" fill="none" stroke="#1f2150" stroke-width="2.2" stroke-linecap="round" stroke-linejoin="round"/>
<path d="M142.6,117.2 L142.6,140 M153.8,124.6 L143.4,133 M147.2,130.2 L154.8,140" fill="none" stroke="#1f2150" stroke-width="2.2" stroke-linecap="round" stroke-linejoin="round"/>
<path d="M161.2,124.6 L161.2,140" fill="none" stroke="#1f2150" stroke-width="2.2" stroke-linecap="round" stroke-linejoin="round"/>
<circle cx="161.2" cy="118.8" r="1.4" fill="#1f2150"/>
<path d="M169.6,117.2 L169.6,140" fill="none" stroke="#1f2150" stroke-width="2.2" stroke-linecap="round" stroke-linejoin="round"/>
<circle cx="183.6" cy="132.3" r="7.3" fill="none" stroke="#1f2150" stroke-width="2.2" stroke-linecap="round" stroke-linejoin="round"/>
<path d="M191,125 L191,140" fill="none" stroke="#1f2150" stroke-width="2.2" stroke-linecap="round" stroke-linejoin="round"/>
<circle cx="2183.3" cy="128.8" r="9.3" fill="none" stroke="#444" stroke-width="1.5"/><text x="2183.3" y="133.4" text-anchor="middle" font-size="13.2" fill="#444" font-family="Liberation Serif, serif">?</text>
<circle cx="2235" cy="129" r="9.3" fill="none" stroke="#444" stroke-width="1.5"/><ellipse cx="2235" cy="129" rx="3.91" ry="9.3" fill="none" stroke="#444" stroke-width="1.4"/><path d="M2226.7,126 L2243.3,126 M2226.7,132 L2243.3,132" stroke="#444" stroke-width="1.4"/>
<path d="M80,179.6 L98,179.6 M80,185.7 L98,185.7 M80,191.7 L98,191.7" stroke="#333" stroke-width="1.6"/>
<path d="M79.6,251.3 L79.6,235.2 Q79.6,233.7 81.1,233.7 L89,233.7 Q90.5,233.7 90.5,235.2 L90.5,237.6 M87.9,251.3 L87.9,239 Q87.9,237.6 89.3,237.6 L96.3,237.6 Q97.7,237.6 97.7,239 L97.7,251.3 L79.2,251.3" fill="none" stroke="#808080" stroke-width="1.4"/>
<path d="M82.2,237.8 L84.8,237.8 M82.2,240.5 L84.8,240.5 M82.2,243 L84.8,243 M82.2,245.6 L84.8,245.6 M82.2,248.2 L84.8,248.2" stroke="#808080" stroke-width="1.1"/>
<path d="M90.3,239.8 L90.3,241.2 M94.6,239.8 L94.6,241.2 M90.3,244.5 L90.3,246 M94.6,244.5 L94.6,246 M91.2,248.5 L94.6,248.5 L94.6,251.2" stroke="#808080" stroke-width="1.3" fill="none"/>
<path d="M82.1,309.2 L82.1,289.4 Q82.1,288.6 82.9,288.6 L92.8,288.6 Q93.6,288.6 93.6,289.4 L93.6,297.2 L96.1,297.2 Q96.9,297.2 96.9,298 L96.9,309.2 Z" fill="#fff"/>
<path d="M85.5,291.8 L85.5,293.4 M89.5,291.8 L89.5,293.4 M85.5,296.2 L85.5,297.8 M89.5,296.2 L89.5,297.8 M85.5,299.8 L85.5,301.4 M89.5,299.8 L89.5,301.4 M93.2,299.8 L93.2,301.4" stroke="#6f80e8" stroke-width="1.4"/>
<path d="M86.3,304.5 L93.7,304.5 L93.7,309.2 L92,309.2 L92,306 L90.6,306 L90.6,309.2 L89.2,309.2 L89.2,306 L87.8,306 L87.8,309.2 L86.3,309.2 Z" fill="#8a8fd8"/>
<path d="M86.97,348.15 L87.21,345.57 L90.79,345.57 L91.03,348.15 L93.74,349.71 L96.09,348.63 L97.89,351.74 L95.78,353.24 L95.78,356.36 L97.89,357.86 L96.09,360.97 L93.74,359.89 L91.03,361.45 L90.79,364.03 L87.21,364.03 L86.97,361.45 L84.26,359.89 L81.91,360.97 L80.11,357.86 L82.22,356.36 L82.22,353.24 L80.11,351.74 L81.91,348.63 L84.26,349.71 Z" fill="none" stroke="#7a7a7a" stroke-width="1.35" stroke-linejoin="round"/><circle cx="89" cy="354.8" r="2.54" fill="none" stroke="#7a7a7a" stroke-width="1.35"/>
<path d="M140.6,257 L140.6,239 L145,238 L146.5,236.5 L150,236 L151.5,234.5 L153.5,234.5 L157.3,236.8 L157.3,241.5 M152.6,234.8 L152.6,257 M157.3,245 L160.6,245 L160.6,257 M157.3,245.5 L157.3,257 M140.4,257 L160.8,257" stroke="#555" stroke-width="1.4" fill="none" stroke-linejoin="round" stroke-linecap="round"/>
<circle cx="156.8" cy="243.4" r="1.5" stroke="#555" stroke-width="1.2" fill="none"/>
<path d="M143.5,246.5 L143.5,241.5 L148,241.5 M143.8,241.8 L148,245.5 M143,250.5 L149,248 M146.5,246.5 L149.5,248 L147,250.5" stroke="#555" stroke-width="1.3" fill="none" stroke-linejoin="round"/>
<path d="M143,364.8 L145,364.8 L145,375.6 L143,375.6 Z M149.4,361 L151.8,361 L151.8,375.6 L149.4,375.6 Z M155.2,361 L156.8,361 L156.8,375.6 L155.2,375.6 Z" fill="#9a9a9a"/>
<rect x="139.2" y="364.2" width="4.0" height="11.2" rx="1.2" fill="#c4c4c4" stroke="#808080" stroke-width="1.1"/>
<path d="M139.79999999999998,364.8 L142.6,364.8 M139.79999999999998,374.8 L142.6,374.8" stroke="#555" stroke-width="1.4"/>
<rect x="145" y="356.4" width="4.4" height="19.0" rx="1.2" fill="#c4c4c4" stroke="#808080" stroke-width="1.1"/>
<path d="M145.6,357.0 L148.8,357.0 M145.6,374.8 L148.8,374.8" stroke="#555" stroke-width="1.4"/>
<rect x="151.6" y="359.6" width="3.8" height="15.8" rx="1.2" fill="#c4c4c4" stroke="#808080" stroke-width="1.1"/>
<path d="M152.2,360.20000000000005 L154.8,360.20000000000005 M152.2,374.8 L154.8,374.8" stroke="#555" stroke-width="1.4"/>
<rect x="156.8" y="353.2" width="4.8" height="22.2" rx="1.2" fill="#c4c4c4" stroke="#808080" stroke-width="1.1"/>
<path d="M157.4,353.8 L161.0,353.8 M157.4,374.8 L161.0,374.8" stroke="#555" stroke-width="1.4"/>
<circle cx="150.5" cy="584.8" r="11" stroke="#555" stroke-width="1.4" fill="none" stroke-linejoin="round" stroke-linecap="round"/>
<path d="M150,574 L145.3,580.5 Q144.3,583 147.3,584.3 Q150.3,585.8 148.8,589.5 L147.5,592.8 M139.6,584 L144.8,588.8 L147.5,592.8 M158.8,578.6 L154.8,580 Q151.8,582 153.6,584.5 L156.8,586 L157.6,590.2" stroke="#555" stroke-width="1.4" fill="none" stroke-linejoin="round" stroke-linecap="round"/>
<path d="M150.5,691.8 C145,697 141.5,701.5 141.5,706 C141.5,711 145.5,714.7 150.5,714.7 C155.5,714.7 159.5,711 159.5,706 C159.5,701.5 156,697 150.5,691.8 Z" stroke="#555" stroke-width="1.4" fill="none" stroke-linejoin="round" stroke-linecap="round"/>
<path d="M152.5,698.5 L147,706 L153.5,704.5 L148.5,711.5" stroke="#555" stroke-width="1.4" fill="none" stroke-linejoin="round" stroke-linecap="round"/>
<path d="M149.6,1038.2 L151.2,1026 M149.8,1021.5 Q150.5,1018 153,1017.6 L161.6,1016.6 Q162,1023 160,1026.5 Q157.5,1029.2 152.5,1028.8 L151,1028.6 M151.2,1029 L155.6,1021.4" stroke="#555" stroke-width="1.4" fill="none" stroke-linejoin="round" stroke-linecap="round"/>
<path d="M150.6,1032.4 Q150.8,1027.5 147,1025.2 Q143,1023.8 139,1024.4 Q139.2,1029.5 142,1031.6 Q145,1033.4 150.6,1032.4 M143,1027.4 L148.4,1031.2" stroke="#555" stroke-width="1.4" fill="none" stroke-linejoin="round" stroke-linecap="round"/>
<path d="M139,1145.5 L150.5,1134.5 L153.5,1137 M142.2,1146 L142.2,1155.6 Q142.2,1157 143.6,1157 L153.5,1157" stroke="#555" stroke-width="1.4" fill="none" stroke-linejoin="round" stroke-linecap="round"/>
<path d="M152.4,1140.6 Q150.6,1144.5 152.6,1148 L154.3,1149.6 L154.3,1156.6 L158.4,1156.6 L158.4,1149.6 L160.2,1148 Q162.4,1144.5 158.6,1140.4 L158.2,1143.4 Q156.3,1144.6 154.4,1143.4 Z" stroke="#555" stroke-width="1.4" fill="none" stroke-linejoin="round" stroke-linecap="round"/>
<path d="M140,1263 L150.3,1252.5 L155.8,1258 M142.3,1264 L142.3,1273.2 Q142.3,1274.6 143.7,1274.6 L154,1274.6" stroke="#555" stroke-width="1.4" fill="none" stroke-linejoin="round" stroke-linecap="round"/>
<path d="M149.6,1261.6 L155.5,1259.5 L161.6,1261.6 L161.6,1267 Q161.2,1271.8 155.5,1273.8 Q150,1271.8 149.6,1267 Z M152.4,1266.6 L155,1268.6 L158.4,1265.2" stroke="#555" stroke-width="1.4" fill="none" stroke-linejoin="round" stroke-linecap="round"/>
<path d="M383.7,633.0 L389.2,639.0 L394.7,633.0" fill="none" stroke="#8a8a8a" stroke-width="1.3"/>
<path d="M383.7,751.0 L389.2,757.0 L394.7,751.0" fill="none" stroke="#8a8a8a" stroke-width="1.3"/>
<path d="M383.7,802.0 L389.2,808.0 L394.7,802.0" fill="none" stroke="#8a8a8a" stroke-width="1.3"/>
<path d="M383.7,854.0 L389.2,860.0 L394.7,854.0" fill="none" stroke="#8a8a8a" stroke-width="1.3"/>
<path d="M383.7,905.0 L389.2,911.0 L394.7,905.0" fill="none" stroke="#8a8a8a" stroke-width="1.3"/>
<path d="M383.7,957.0 L389.2,963.0 L394.7,957.0" fill="none" stroke="#8a8a8a" stroke-width="1.3"/>
<path d="M383.7,1074.0 L389.2,1080.0 L394.7,1074.0" fill="none" stroke="#8a8a8a" stroke-width="1.3"/>
<path d="M383.7,1193.0 L389.2,1199.0 L394.7,1193.0" fill="none" stroke="#8a8a8a" stroke-width="1.3"/>
<path d="M305.5,181.5 L316.5,181.5 L311.0,189.3 Z" fill="#222" stroke="#222" stroke-width="0.8" stroke-linejoin="round"/>
<path d="M462.3,311.5 L476.5,311.5 L476.5,322.5 L462.3,322.5 Z M462.3,315.3 L476.5,315.3 M466,309 L466,312.5 M473,309 L473,312.5" fill="none" stroke="#fff" stroke-width="1.5"/>
<path d="M1417,307.5 L1429.5,307.5 L1432.2,310.2 L1432.2,321.5 L1417,321.5 Z M1420.5,307.5 L1420.5,311 L1427.5,311 L1427.5,307.5" fill="none" stroke="#666" stroke-width="1.3"/>
<circle cx="1424.6" cy="316.5" r="2" fill="none" stroke="#666" stroke-width="1.3"/>
<circle cx="615.8" cy="403" r="6.2" fill="none" stroke="#666" stroke-width="1.1"/><path d="M615.8,402 L615.8,406.3" stroke="#666" stroke-width="1.3"/><circle cx="615.8" cy="399.8" r="0.8" fill="#666"/>
<circle cx="716.7" cy="590" r="6.2" fill="none" stroke="#666" stroke-width="1.1"/><path d="M716.7,589 L716.7,593.3" stroke="#666" stroke-width="1.3"/><circle cx="716.7" cy="586.8" r="0.8" fill="#666"/>
<circle cx="1232" cy="403" r="6.2" fill="none" stroke="#666" stroke-width="1.1"/><path d="M1232,402 L1232,406.3" stroke="#666" stroke-width="1.3"/><circle cx="1232" cy="399.8" r="0.8" fill="#666"/>
<circle cx="666" cy="871" r="6.2" fill="none" stroke="#666" stroke-width="1.1"/><path d="M666,870 L666,874.3" stroke="#666" stroke-width="1.3"/><circle cx="666" cy="867.8" r="0.8" fill="#666"/>
<circle cx="1653.5" cy="871" r="6.2" fill="none" stroke="#666" stroke-width="1.1"/><path d="M1653.5,870 L1653.5,874.3" stroke="#666" stroke-width="1.3"/><circle cx="1653.5" cy="867.8" r="0.8" fill="#666"/>
<path d="M653.7,430.6 L663.7,430.6 L658.7,437.6 Z" fill="#222" stroke="#222" stroke-width="0.8" stroke-linejoin="round"/>
<path d="M653.7,617.6 L663.7,617.6 L658.7,624.6 Z" fill="#222" stroke="#222" stroke-width="0.8" stroke-linejoin="round"/>
<path d="M1118.8,430.2 L1128.8,430.2 L1123.8,437.2 Z" fill="#222" stroke="#222" stroke-width="0.8" stroke-linejoin="round"/>
<path d="M653.7,897.8 L663.7,897.8 L658.7,904.8 Z" fill="#222" stroke="#222" stroke-width="0.8" stroke-linejoin="round"/>
<text x="1772" y="433.5" font-size="15" fill="#333" font-family="Liberation Sans, sans-serif">All</text>
<path d="M1793,424 L1804,424 L1798.5,431 Z" fill="#222" stroke="#222" stroke-width="0.8" stroke-linejoin="round"/>
<text x="1307" y="901.5" font-size="15" fill="#333" font-family="Liberation Sans, sans-serif">All</text>
<path d="M1327.5,892 L1338.5,892 L1333.0,899 Z" fill="#222" stroke="#222" stroke-width="0.8" stroke-linejoin="round"/>
<path d="M465,521 L468,523.5 L471,522 L477.5,527.8 M473.5,528.2 L478.2,528.2 L478.2,523.8" transform="translate(0,0)" fill="none" stroke="#22b350" stroke-width="1.8" stroke-linejoin="round"/>
<path d="M465,521 L468,523.5 L471,522 L477.5,527.8 M473.5,528.2 L478.2,528.2 L478.2,523.8" transform="translate(0,187)" fill="none" stroke="#22b350" stroke-width="1.8" stroke-linejoin="round"/>
</svg>
</div>
</body></html>
